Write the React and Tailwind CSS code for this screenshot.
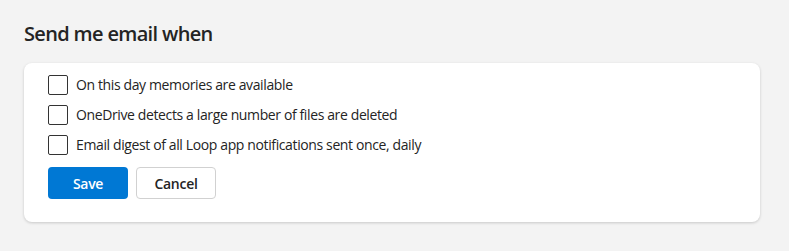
import React from "react";

const items = [
  "On this day memories are available",
  "OneDrive detects a large number of files are deleted",
  "Email digest of all Loop app notifications sent once, daily",
];

export default function App() {
  return (
    <div
      className="w-[789px] h-[251px] bg-[#f3f3f3] px-6 pt-5 text-[#242424]"
      style={{ fontFamily: '"Segoe UI", "Open Sans", sans-serif' }}
    >
      <h2 className="text-[20px] leading-[28px] font-semibold tracking-[-0.033em] mb-[15px]">Send me email when</h2>
      <div className="w-[736px] bg-white rounded-lg shadow-[0_1px_3px_rgba(0,0,0,0.18)] px-6 pt-3 pb-[23px]">
        <div className="flex flex-col gap-[10px]">
          {items.map((t) => (
            <label key={t} className="flex items-center h-5 gap-2">
              <span className="w-5 h-5 border border-[#333333] rounded-[2px] bg-white shrink-0" />
              <span className="text-[14px] leading-5 tracking-[-0.027em]">{t}</span>
            </label>
          ))}
        </div>
        <div className="flex gap-2 mt-3">
          <button className="w-20 h-8 rounded-[4px] bg-[#0078d4] text-white text-[14px] font-semibold tracking-[-0.02em]">Save</button>
          <button className="w-20 h-8 rounded-[4px] bg-white border border-[#d1d1d1] text-[14px] font-semibold tracking-[-0.02em] text-[#242424]">Cancel</button>
        </div>
      </div>
    </div>
  );
}
